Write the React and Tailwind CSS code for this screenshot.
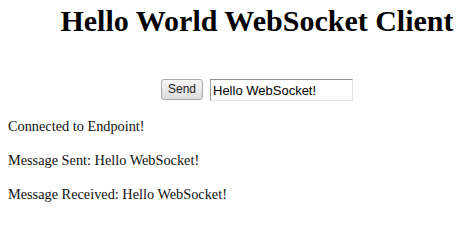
import React from "react";

export default function App() {
  return (
    <div className="w-full min-h-[223px] overflow-hidden bg-white">
      <div className="w-[514px] px-[8px] text-black font-['Liberation_Serif','Times_New_Roman',serif]">
        <h1 className="mt-[4px] text-center text-[30px] leading-[34px] font-bold">
          Hello World WebSocket Client
        </h1>
        <div className="mt-[41px] flex items-start justify-center gap-[7px]">
          <button className="h-[21px] w-[42px] rounded-[3px] border border-[#a8a8a8] bg-gradient-to-b from-[#f6f6f6] to-[#dcdcdc] text-[12px] leading-[19px] text-[#1e1e1e] font-['Liberation_Sans',Arial,sans-serif]">
            Send
          </button>
          <input
            type="text"
            defaultValue="Hello WebSocket!"
            className="h-[22px] w-[143px] border border-t-[#8f8f8f] border-l-[#9a9a9a] border-r-[#e2e2e2] border-b-[#e2e2e2] bg-white px-[2px] text-[13px] text-black outline-none font-['Liberation_Sans',Arial,sans-serif]"
          />
        </div>
        <div className="mt-[16px] flex flex-col gap-[16px] text-[14.3px] leading-[18px] text-[#111]">
          <p>Connected to Endpoint!</p>
          <p>Message Sent: Hello WebSocket!</p>
          <p>Message Received: Hello WebSocket!</p>
        </div>
      </div>
    </div>
  );
}
